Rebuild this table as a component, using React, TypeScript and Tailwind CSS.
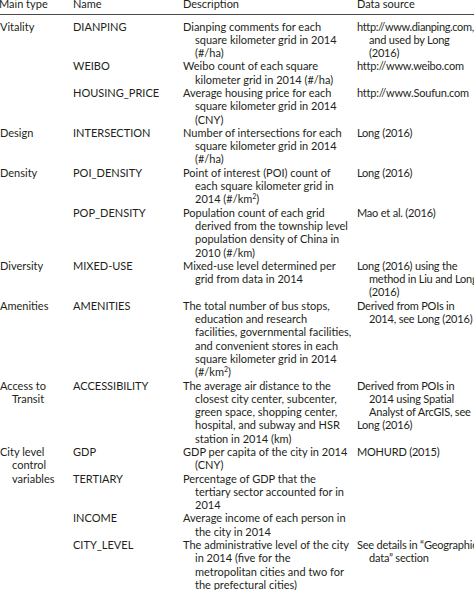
import React from "react";

type Item = {
  name: string;
  desc: React.ReactNode[];
  source: React.ReactNode[];
  flatSourceLast?: boolean;
};

type Group = { type: string[]; items: Item[] };

const km2 = (
  <>
    #/km<span className="text-[7px] leading-[0] relative -top-[4px]">2</span>
  </>
);

const groups: Group[] = [
  {
    type: ["Vitality"],
    items: [
      {
        name: "DIANPING",
        desc: ["Dianping comments for each", "square kilometer grid in 2014", "(#/ha)"],
        source: [<span className="tracking-[-0.35px]">http://www.dianping.com,</span>, "and used by Long", "(2016)"],
      },
      {
        name: "WEIBO",
        desc: ["Weibo count of each square", "kilometer grid in 2014 (#/ha)"],
        source: ["http://www.weibo.com"],
      },
      {
        name: "HOUSING_PRICE",
        desc: ["Average housing price for each", "square kilometer grid in 2014", "(CNY)"],
        source: ["http://www.Soufun.com"],
      },
    ],
  },
  {
    type: ["Design"],
    items: [
      {
        name: "INTERSECTION",
        desc: ["Number of intersections for each", "square kilometer grid in 2014", "(#/ha)"],
        source: ["Long (2016)"],
      },
    ],
  },
  {
    type: ["Density"],
    items: [
      {
        name: "POI_DENSITY",
        desc: ["Point of interest (POI) count of", "each square kilometer grid in", <>2014 ({km2})</>],
        source: ["Long (2016)"],
      },
      {
        name: "POP_DENSITY",
        desc: [
          "Population count of each grid",
          "derived from the township level",
          "population density of China in",
          "2010 (#/km)",
        ],
        source: ["Mao et al. (2016)"],
      },
    ],
  },
  {
    type: ["Diversity"],
    items: [
      {
        name: "MIXED-USE",
        desc: ["Mixed-use level determined per", "grid from data in 2014"],
        source: ["Long (2016) using the", "method in Liu and Long", "(2016)"],
      },
    ],
  },
  {
    type: ["Amenities"],
    items: [
      {
        name: "AMENITIES",
        desc: [
          "The total number of bus stops,",
          "education and research",
          "facilities, governmental facilities,",
          "and convenient stores in each",
          "square kilometer grid in 2014",
          <>({km2})</>,
        ],
        source: ["Derived from POIs in", "2014, see Long (2016)"],
      },
    ],
  },
  {
    type: ["Access to", "Transit"],
    items: [
      {
        name: "ACCESSIBILITY",
        desc: [
          "The average air distance to the",
          "closest city center, subcenter,",
          "green space, shopping center,",
          "hospital, and subway and HSR",
          "station in 2014 (km)",
        ],
        source: ["Derived from POIs in", "2014 using Spatial", "Analyst of ArcGIS, see", "Long (2016)"],
        flatSourceLast: true,
      },
    ],
  },
  {
    type: ["City level", "control", "variables"],
    items: [
      {
        name: "GDP",
        desc: ["GDP per capita of the city in 2014", "(CNY)"],
        source: ["MOHURD (2015)"],
      },
      {
        name: "TERTIARY",
        desc: ["Percentage of GDP that the", "tertiary sector accounted for in", "2014"],
        source: [],
      },
      {
        name: "INCOME",
        desc: ["Average income of each person in", "the city in 2014"],
        source: [],
      },
      {
        name: "CITY_LEVEL",
        desc: [
          "The administrative level of the city",
          "in 2014 (five for the",
          "metropolitan cities and two for",
          "the prefectural cities)",
        ],
        source: ["See details in \u201cGeographic", "data\u201d section"],
      },
    ],
  },
];

const Lines = ({ lines, flatLast }: { lines: React.ReactNode[]; flatLast?: boolean }) => (
  <div>
    {lines.map((l, i) => (
      <div
        key={i}
        className={i > 0 && !(flatLast && i === lines.length - 1) ? "pl-[12px]" : ""}
      >
        {l}
      </div>
    ))}
  </div>
);

const itemCols = "grid grid-cols-[110px_174px_117px]";

export default function App() {
  return (
    <div
      className="w-[474px] h-[590px] overflow-hidden bg-white text-[#231f20] text-[11px] leading-[13.29px] whitespace-nowrap"
      style={{ fontFamily: "Lato, 'Noto Sans', sans-serif" }}
    >
      <div className="grid grid-cols-[73px_110px_174px_117px] h-[15px] border-b border-[#4a4a4a]">
        <div className="-mt-[3px] -ml-[1px]">Main type</div>
        <div className="-mt-[3px]">Name</div>
        <div className="-mt-[3px]">Description</div>
        <div className="-mt-[3px]">Data source</div>
      </div>
      <div className="pt-[4.5px]">
        {groups.map((g, gi) => (
          <div key={gi} className="grid grid-cols-[73px_401px]">
            <Lines lines={g.type} />
            <div>
              {g.items.map((it, i) => (
                <div key={i} className={itemCols}>
                  <div>{it.name}</div>
                  <Lines lines={it.desc} />
                  <div className="tracking-[-0.2px]">
                    <Lines lines={it.source} flatLast={it.flatSourceLast} />
                  </div>
                </div>
              ))}
            </div>
          </div>
        ))}
      </div>
    </div>
  );
}
